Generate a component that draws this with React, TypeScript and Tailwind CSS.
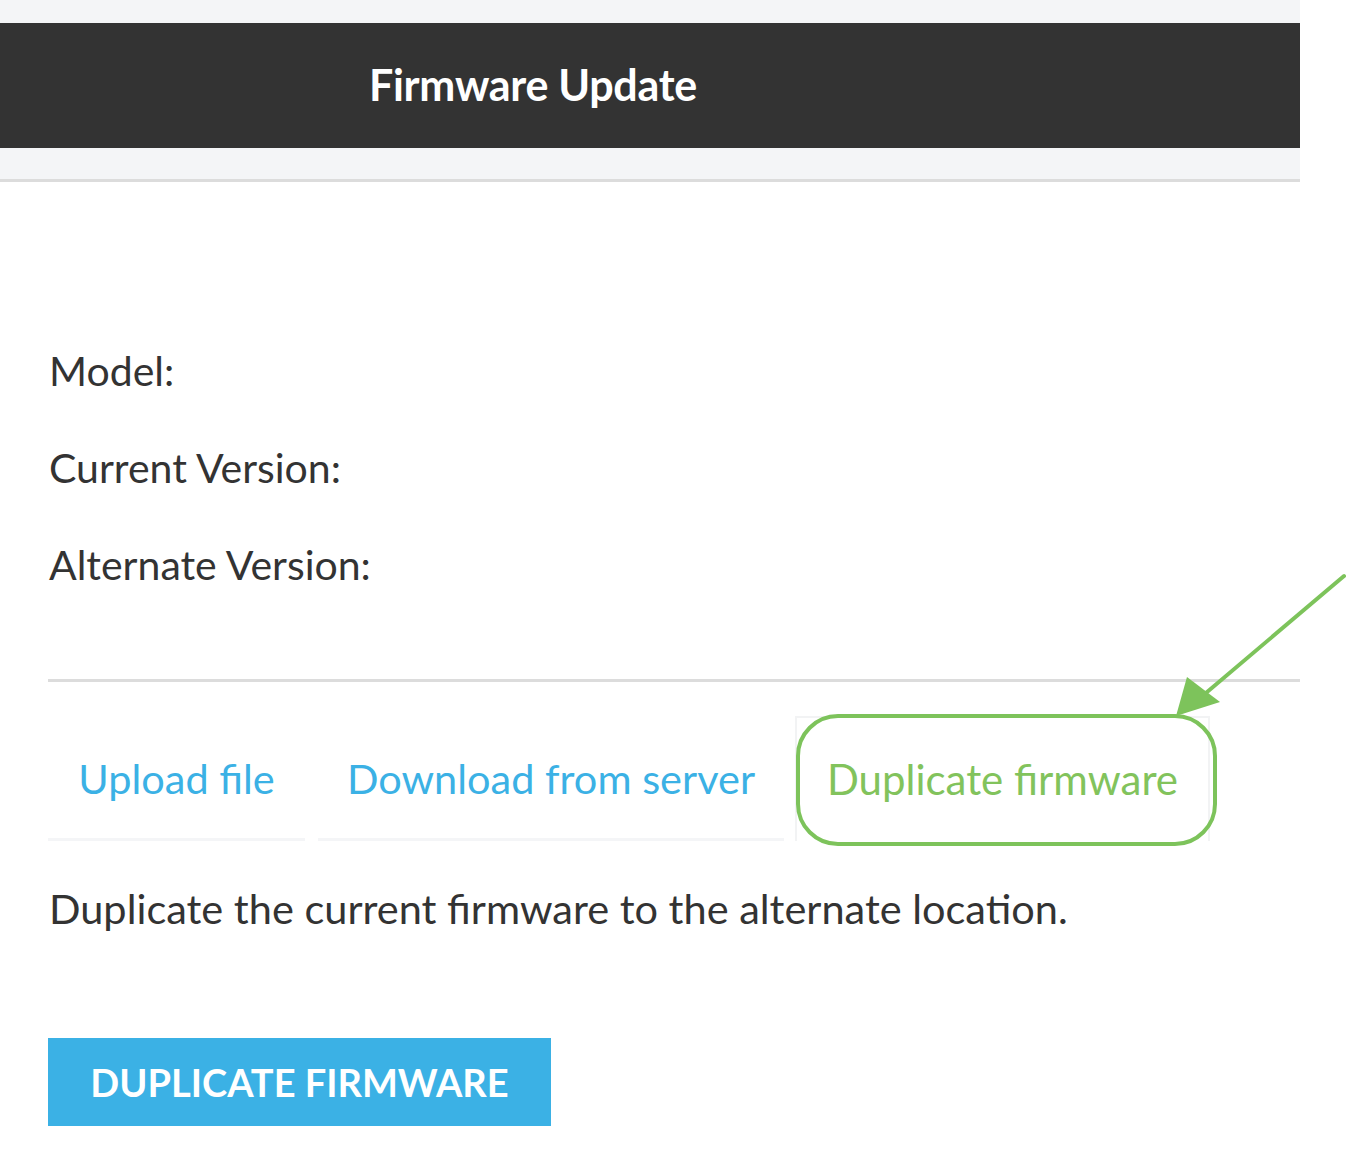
import React from 'react';

const font = { fontFamily: 'Lato, "Open Sans", sans-serif' };

const fields = ['Model:', 'Current Version:', 'Alternate Version:'];

const tabs = [
  { label: 'Upload file', width: 'w-[257px]' },
  { label: 'Download from server', width: 'w-[466px]' },
];

export default function App() {
  return (
    <div className="relative w-[1346px] h-[1154px] bg-white text-[#333333]" style={font}>
      <div className="w-[1300px] h-[182px] bg-[#f4f5f7] pt-[23px] border-b-[3px] border-[#dcdcdc]">
        <div className="h-[125px] bg-[#333333] flex items-center pl-[369px]">
          <h1 className="text-white font-bold text-[43px] tracking-[-0.3px]">Firmware Update</h1>
        </div>
      </div>

      <div className="w-[1300px] pl-[48px]">
        <div className="pt-[140px] flex flex-col">
          {fields.map((f) => (
            <div key={f} className="h-[97px] flex items-center text-[41px] pl-[1px]">
              {f}
            </div>
          ))}
        </div>

        <div className="mt-[66px] border-t-[3px] border-[#dcdcdc]" />

        <div className="mt-[34px] flex items-end">
          {tabs.map((t, i) => (
            <div
              key={t.label}
              className={`${t.width} h-[125px] flex items-center justify-center pt-[3px] border-b-[3px] border-[#f4f5f7] text-[41.5px] text-[#3bb1e5] ${i === 0 ? 'mr-[13px]' : 'mr-[11px]'}`}
            >
              {t.label}
            </div>
          ))}
          <div className="w-[415px] h-[125px] flex items-center justify-center border-2 border-b-0 border-[#f2f3f4] text-[42px] text-[#82c35c]">
            Duplicate firmware
          </div>
        </div>

        <p className="h-[135px] flex items-center text-[41.5px] pl-[1px]">
          Duplicate the current firmware to the alternate location.
        </p>

        <div className="mt-[62px]">
          <button className="w-[503px] h-[88px] bg-[#3bb1e5] text-white font-bold text-[38px] uppercase">
            Duplicate firmware
          </button>
        </div>
      </div>

      {/* annotation overlay */}
      <div className="absolute left-[796px] top-[714px] w-[421px] h-[132px] rounded-[42px] border-4 border-[#7dc35b]" />
      <svg className="absolute left-0 top-0" width="1346" height="1154" viewBox="0 0 1346 1154">
        <line x1="1344" y1="576" x2="1200" y2="698" stroke="#7dc35b" strokeWidth="4" strokeLinecap="round" />
        <polygon points="1176,716 1187,677 1220,702" fill="#7dc35b" />
      </svg>
    </div>
  );
}
